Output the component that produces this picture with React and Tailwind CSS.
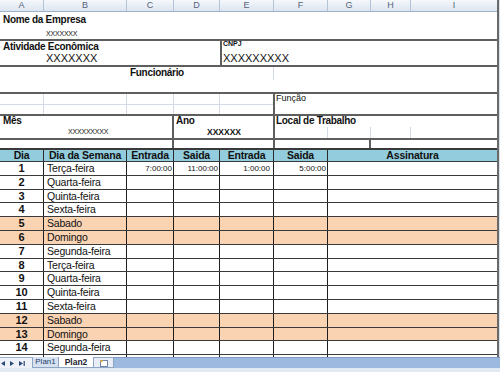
import React from "react";

const letters = [
  { l: "A", w: "w-[44px] border-r" },
  { l: "B", w: "w-[83px] border-r" },
  { l: "C", w: "w-[47px] border-r" },
  { l: "D", w: "w-[46px] border-r" },
  { l: "E", w: "w-[54px] border-r" },
  { l: "F", w: "w-[54px] border-r" },
  { l: "G", w: "w-[43px] border-r" },
  { l: "H", w: "w-[40px] border-r" },
  { l: "I", w: "flex-1" },
];

const heads = [
  { t: "Dia", w: "w-[44px] border-r" },
  { t: "Dia da Semana", w: "w-[83px] border-r" },
  { t: "Entrada", w: "w-[47px] border-r" },
  { t: "Saida", w: "w-[46px] border-r" },
  { t: "Entrada", w: "w-[54px] border-r" },
  { t: "Saida", w: "w-[54px] border-r" },
  { t: "Assinatura", w: "flex-1" },
];

const days = [
  { n: 1, d: "Terça-feira", times: ["7:00:00", "11:00:00", "1:00:00", "5:00:00"] },
  { n: 2, d: "Quarta-feira" },
  { n: 3, d: "Quinta-feira" },
  { n: 4, d: "Sexta-feira" },
  { n: 5, d: "Sabado", off: true },
  { n: 6, d: "Domingo", off: true },
  { n: 7, d: "Segunda-feira" },
  { n: 8, d: "Terça-feira" },
  { n: 9, d: "Quarta-feira" },
  { n: 10, d: "Quinta-feira" },
  { n: 11, d: "Sexta-feira" },
  { n: 12, d: "Sabado", off: true },
  { n: 13, d: "Domingo", off: true },
  { n: 14, d: "Segunda-feira" },
  { n: 15, d: "Terça-feira" },
];

function DayRow({ row }) {
  const t = row.times || ["", "", "", ""];
  return (
    <div
      className={`flex h-[13.8px] shrink-0 border-b border-[#3a3a3a] text-[10.5px] leading-[13px] ${
        row.off ? "bg-[#fad3b3]" : "bg-white"
      }`}
    >
      <div className="w-[44px] border-r border-[#1e1e1e] text-center font-bold text-[11px]">{row.n}</div>
      <div className="w-[83px] border-r border-[#1e1e1e] pl-[3px] tracking-[-0.2px]">{row.d}</div>
      <div className="w-[47px] border-r border-[#1e1e1e] pr-[1px] text-right text-[8px]">{t[0]}</div>
      <div className="w-[46px] border-r border-[#1e1e1e] pr-[1px] text-right text-[8px]">{t[1]}</div>
      <div className="w-[54px] border-r border-[#1e1e1e] pr-[3px] text-right text-[8px]">{t[2]}</div>
      <div className="w-[54px] border-r border-[#1e1e1e] pr-[1px] text-right text-[8px]">{t[3]}</div>
      <div className="flex-1" />
    </div>
  );
}

export default function App() {
  const label = "font-bold text-[10px] tracking-[-0.3px]";
  return (
    <div className="w-[500px] h-[372px] overflow-hidden bg-[#d9e1ec] font-['Liberation_Sans',Arial,sans-serif] text-[#111]">
      <div className="w-[499px] h-[357px] overflow-hidden bg-white border-r-2 border-[#6a6a6a] flex flex-col">
        {/* column letters */}
        <div className="flex h-[12px] shrink-0 bg-gradient-to-b from-[#f5f8fc] to-[#dde5f0] border-b border-[#9fb2cb] text-[9px] leading-[11px] text-[#53647d]">
          {letters.map((c) => (
            <div key={c.l} className={`${c.w} border-[#b3c3d8] text-center`}>
              {c.l}
            </div>
          ))}
        </div>

        {/* Nome da Empresa */}
        <div className="h-[27px] shrink-0 flex flex-col">
          <div className={`h-[16px] pl-[3px] leading-[16px] ${label}`}>Nome da Empresa</div>
          <div className="pl-[46px] text-[7px] leading-[11px] tracking-[-0.2px]">XXXXXXX</div>
        </div>

        {/* Atividade / CNPJ */}
        <div className="h-[26px] shrink-0 flex border-t-2 border-[#5e5e5e]">
          <div className="w-[222px] border-r-2 border-[#5e5e5e] flex flex-col">
            <div className={`h-[11px] pl-[3px] leading-[11px] ${label}`}>Atividade Econômica</div>
            <div className="pl-[46px] text-[11px] leading-[13px]">XXXXXXX</div>
          </div>
          <div className="flex-1 flex flex-col">
            <div className="h-[5px] pl-[1px] text-[7px] font-bold leading-[5px]">CNPJ</div>
            <div className="h-[6px]" />
            <div className="pl-[1px] text-[11px] leading-[13px]">XXXXXXXXX</div>
          </div>
        </div>

        {/* Funcionário */}
        <div className="h-[27px] shrink-0 flex flex-col border-t-2 border-[#5e5e5e]">
          <div className="flex h-[13px]">
            <div className={`w-[274px] border-r border-[#d4dbe6] pl-[130px] leading-[11px] ${label}`}>Funcionário</div>
            <div className="flex-1" />
          </div>
        </div>

        {/* Função */}
        <div className="h-[22px] shrink-0 flex border-t-2 border-[#5e5e5e]">
          <div className="w-[275px] border-r-2 border-[#5e5e5e] flex flex-col">
            {[0, 1].map((r) => (
              <div key={r} className={`flex flex-1 ${r === 0 ? "border-b border-[#d4dbe6]" : ""}`}>
                <div className="w-[44px] border-r border-[#d4dbe6]" />
                <div className="w-[83px] border-r border-[#d4dbe6]" />
                <div className="w-[47px] border-r border-[#d4dbe6]" />
                <div className="w-[46px] border-r border-[#d4dbe6]" />
                <div className="flex-1" />
              </div>
            ))}
          </div>
          <div className="flex-1 pl-[1px] text-[9px] leading-[9px]">Função</div>
        </div>

        {/* Mês / Ano / Local */}
        <div className="h-[24px] shrink-0 flex border-t-2 border-[#5e5e5e]">
          <div className="w-[174px] border-r-2 border-[#5e5e5e] flex flex-col">
            <div className={`h-[9px] pl-[3px] leading-[9px] ${label}`}>Mês</div>
            <div className="pl-[68px] text-[7px] leading-[14px] tracking-[-0.2px]">XXXXXXXXX</div>
          </div>
          <div className="w-[101px] border-r-2 border-[#5e5e5e] flex flex-col">
            <div className={`h-[9px] pl-[2px] leading-[9px] ${label}`}>Ano</div>
            <div className="pl-[33px] text-[8.5px] font-bold leading-[14px]">XXXXXX</div>
          </div>
          <div className="flex-1 flex flex-col">
            <div className={`h-[11px] pl-[1px] leading-[10px] ${label}`}>Local de Trabalho</div>
            <div className="flex flex-1">
              <div className="w-[53px] border-r border-[#d4dbe6]" />
              <div className="w-[43px] border-r border-[#d4dbe6]" />
              <div className="w-[40px] border-r border-[#d4dbe6]" />
              <div className="flex-1" />
            </div>
          </div>
        </div>

        {/* spacer row */}
        <div className="h-[10px] shrink-0 flex border-t-2 border-[#5e5e5e]">
          <div className="w-[174px] border-r-2 border-[#5e5e5e]" />
          <div className="w-[101px] border-r-2 border-[#5e5e5e]" />
          <div className="w-[96px] border-r-2 border-[#5e5e5e]" />
          <div className="flex-1" />
        </div>

        {/* table header */}
        <div className="flex h-[14px] shrink-0 bg-[#93cddd] border-t-2 border-b border-[#3a3a3a] text-[10.5px] font-bold leading-[11px] tracking-[-0.2px]">
          {heads.map((h, i) => (
            <div key={i} className={`${h.w} border-[#2a2a2a] text-center`}>
              {h.t}
            </div>
          ))}
        </div>

        {days.map((row) => (
          <DayRow key={row.n} row={row} />
        ))}
      </div>

      {/* sheet tabs */}
      <div className="flex h-[15px] bg-[#e3e9f2]">
        <div className="flex h-[11px] w-[32px] items-center gap-[5px] pl-[1px] bg-[#eef2f8] border-t border-[#9db3d1]">
          <svg width="4" height="5" viewBox="0 0 4 5"><path d="M4 0L0 2.5L4 5Z" fill="#2c4a78" /></svg>
          <svg width="4" height="5" viewBox="0 0 4 5"><path d="M0 0L4 2.5L0 5Z" fill="#2c4a78" /></svg>
          <svg width="6" height="5" viewBox="0 0 6 5"><path d="M0 0L4 2.5L0 5Z" fill="#2c4a78" /><rect x="4.6" y="0" width="1.2" height="5" fill="#2c4a78" /></svg>
        </div>
        <div className="h-[11px] w-[27px] bg-[#d6e1f0] border-x border-b border-[#8ea5c6] text-[8px] leading-[10px] text-[#233f6a] text-center">
          Plan1
        </div>
        <div className="h-[11px] w-[35px] bg-white border-r border-b border-[#8ea5c6] text-[8.5px] font-bold leading-[10px] text-[#1c2433] text-center">
          Plan2
        </div>
        <div className="h-[11px] w-[20px] bg-[#e9eef6] border-r border-b border-t border-[#8ea5c6] flex items-center justify-center">
          <svg width="10" height="8" viewBox="0 0 10 8">
            <rect x="1.5" y="1.5" width="7" height="6" fill="#fff" stroke="#6f87a8" />
            <path d="M2.5 0.5L4 2L2.5 3.5L1 2Z" fill="#e8b23a" />
          </svg>
        </div>
        <div className="flex-1 h-[11px] bg-[#9db9df] border-t border-[#7d9bc5]" />
      </div>
    </div>
  );
}
